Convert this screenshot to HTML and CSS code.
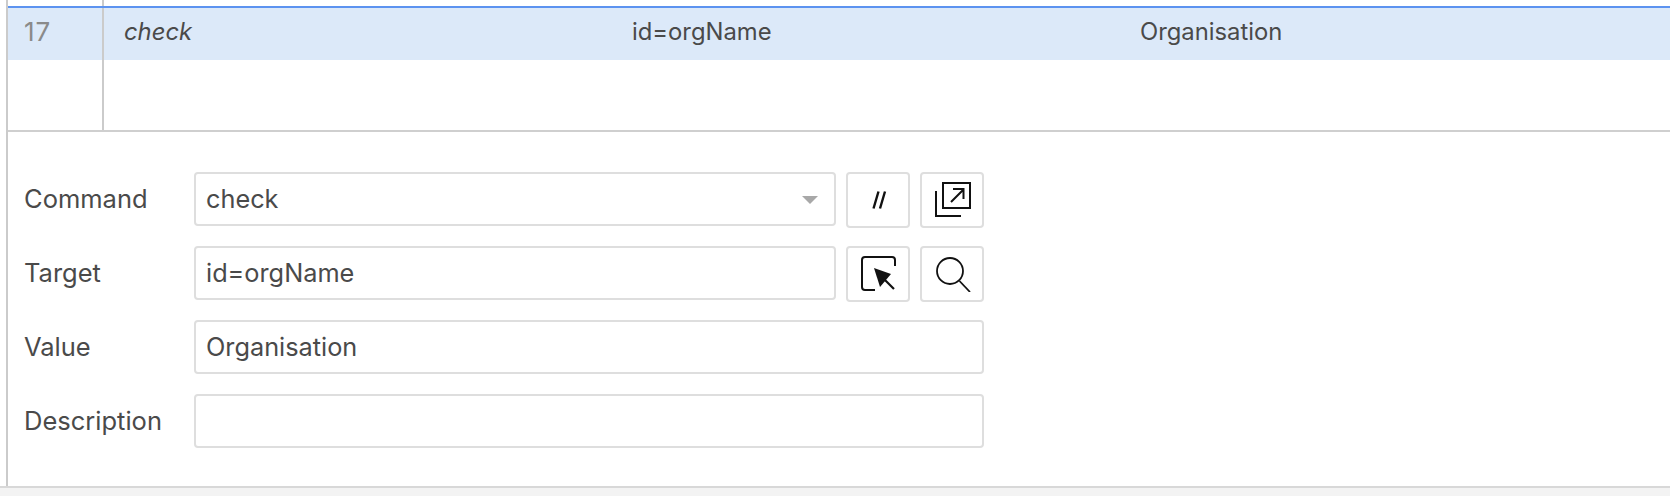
FILE: index.html
```html
<!DOCTYPE html>
<html lang="en">
<head>
<meta charset="utf-8">
<title>Test editor</title>
<link rel="stylesheet" href="styles.css">
</head>
<body>
<div class="panel">
  <div class="table">
    <div class="stub"><div class="num-cell"></div></div>
    <div class="row">
      <div class="num-cell num">17</div>
      <div class="cell cmd">check</div>
      <div class="cell">id=orgName</div>
      <div class="cell">Organisation</div>
    </div>
    <div class="blank"><div class="num-cell"></div></div>
  </div>
  <form class="editor">
    <div class="field">
      <label class="label">Command</label>
      <div class="box select">check<span class="caret"></span></div>
      <button type="button" class="btn">
        <svg width="16" height="20" viewBox="0 0 16 20"><path d="M7.500 1.500 2.500 18.500M14 1.500 9 18.500" fill="none" stroke="#111" stroke-width="2.400"/></svg>
      </button>
      <button type="button" class="btn">
        <svg width="36" height="36" viewBox="0 0 36 36" fill="none" stroke="#111" stroke-width="2"><rect x="8" y="1" width="27" height="25"/><path d="M1 9V34H26M16 20 28 8M18 7H28.500V17"/></svg>
      </button>
    </div>
    <div class="field">
      <label class="label">Target</label>
      <div class="box grow">id=orgName</div>
      <button type="button" class="btn">
        <svg width="36" height="36" viewBox="0 0 36 36"><path d="M14 34H4Q1 34 1 31V4Q1 1 4 1H31Q34 1 34 4V10" fill="none" stroke="#111" stroke-width="2"/><path d="M13 12 30 18 19 31Z" fill="#111"/><path d="M22 22 33 33" fill="none" stroke="#111" stroke-width="2.200"/></svg>
      </button>
      <button type="button" class="btn">
        <svg width="36" height="36" viewBox="0 0 36 36" fill="none" stroke="#111" stroke-width="1.800"><circle cx="15" cy="15" r="13"/><path d="M24.500 25 35 36"/></svg>
      </button>
    </div>
    <div class="field">
      <label class="label">Value</label>
      <div class="box wide">Organisation</div>
    </div>
    <div class="field">
      <label class="label">Description</label>
      <div class="box wide"></div>
    </div>
  </form>
</div>
<div class="footer"></div>
</body>
</html>
```
FILE: styles.css
```css
* { box-sizing: border-box; }
html, body { margin: 0; padding: 0; background: #fff; }
body {
  width: 1670px;
  height: 496px;
  overflow: hidden;
  font-family: Inter, "Liberation Sans", sans-serif;
  font-size: 25.500px;
  color: #4a4a4a;
}
.panel {
  height: 486px;
  margin-left: 6px;
  border-left: 2px solid #cbcbcb;
}
.table {
  height: 132px;
  border-bottom: 2px solid #cfcfcf;
}
.stub { height: 6px; }
.stub .num-cell { height: 6px; }
.num-cell {
  width: 96px;
  flex: none;
  border-right: 2px solid #cbcbcb;
}
.row {
  display: grid;
  grid-template-columns: 96px 508px 508px 1fr;
  height: 54px;
  align-items: center;
  background: #dce9f9;
  border-top: 2px solid #5c93f0;
  font-size: 23.800px;
  line-height: 48px;
}
.row .cell { padding-bottom: 4px; }
.row .num-cell {
  height: 100%;
  display: flex;
  align-items: center;
  padding: 0 0 4px 16px;
}
.num { color: #8a8a8a; font-size: 26px; letter-spacing: 1px; }
.cell { padding-left: 20px; }
.cmd { font-style: italic; }
.blank { height: 70px; }
.blank .num-cell { height: 70px; }
.editor {
  display: flex;
  flex-direction: column;
  gap: 20px;
  padding: 40px 0 0 16px;
}
.field {
  display: flex;
  align-items: flex-start;
  height: 54px;
}
.label {
  width: 170px;
  flex: none;
  line-height: 54px;
}
.box {
  height: 54px;
  border: 2px solid #dedede;
  border-radius: 4px;
  padding-left: 10px;
  line-height: 50px;
  font-size: 25.300px;
  background: #fff;
}
.select { width: 642px; position: relative; }
.grow { width: 642px; }
.wide { width: 790px; }
.caret {
  position: absolute;
  right: 16px;
  top: 22px;
  width: 0;
  height: 0;
  border-left: 8px solid transparent;
  border-right: 8px solid transparent;
  border-top: 8px solid #a8a8a8;
}
.btn {
  width: 64px;
  height: 56px;
  margin-left: 10px;
  padding: 0 0 0 2px;
  display: flex;
  align-items: center;
  justify-content: center;
  border: 2px solid #dedede;
  border-radius: 4px;
  background: #fff;
}
.footer {
  height: 10px;
  background: #f3f3f3;
  border-top: 2px solid #d8d8d8;
}
```
